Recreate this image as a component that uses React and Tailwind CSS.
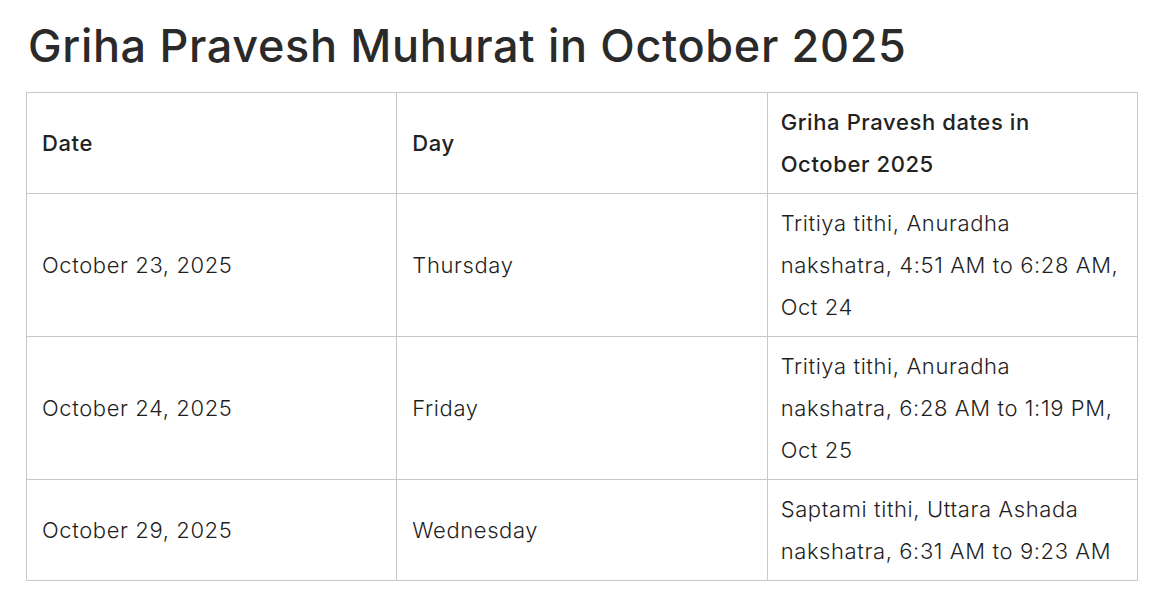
export default function App() {
  const rows = [
    {
      date: 'October 23, 2025',
      day: 'Thursday',
      info: ['Tritiya tithi, Anuradha', 'nakshatra, 4:51 AM to 6:28 AM,', 'Oct 24'],
    },
    {
      date: 'October 24, 2025',
      day: 'Friday',
      info: ['Tritiya tithi, Anuradha', 'nakshatra, 6:28 AM to 1:19 PM,', 'Oct 25'],
    },
    {
      date: 'October 29, 2025',
      day: 'Wednesday',
      info: ['Saptami tithi, Uttara Ashada', 'nakshatra, 6:31 AM to 9:23 AM'],
    },
  ];

  return (
    <div className="w-[1154px] h-[606px] bg-white text-[#222] font-['Inter',sans-serif] pl-[26px] pt-[18px]">
      <h1 className="text-[45px] leading-[56px] font-medium tracking-[0.65px] text-[#2a2a2a] pl-[2px] mb-[18px]">
        Griha Pravesh Muhurat in October 2025
      </h1>

      <table className="w-[1112px] border-collapse table-fixed text-[22px] leading-[42px] tracking-[0.6px]">
        <thead>
          <tr className="h-[100px]">
            <th className="border border-[#c8c8c8] px-[15px] py-[8px] text-left font-medium">Date</th>
            <th className="border border-[#c8c8c8] px-[15px] py-[8px] text-left font-medium">Day</th>
            <th className="border border-[#c8c8c8] px-[13px] py-[8px] text-left font-medium">
              Griha Pravesh dates in<br />October 2025
            </th>
          </tr>
        </thead>
        <tbody className="font-light text-[#1f1f1f]">
          {rows.map((r) => (
            <tr key={r.date}>
              <td className="border border-[#c8c8c8] px-[15px] py-[8px]">{r.date}</td>
              <td className="border border-[#c8c8c8] px-[15px] py-[8px]">{r.day}</td>
              <td className="border border-[#c8c8c8] px-[13px] py-[8px]">
                {r.info.map((line, i) => (
                  <div key={i}>{line}</div>
                ))}
              </td>
            </tr>
          ))}
        </tbody>
      </table>
    </div>
  );
}
